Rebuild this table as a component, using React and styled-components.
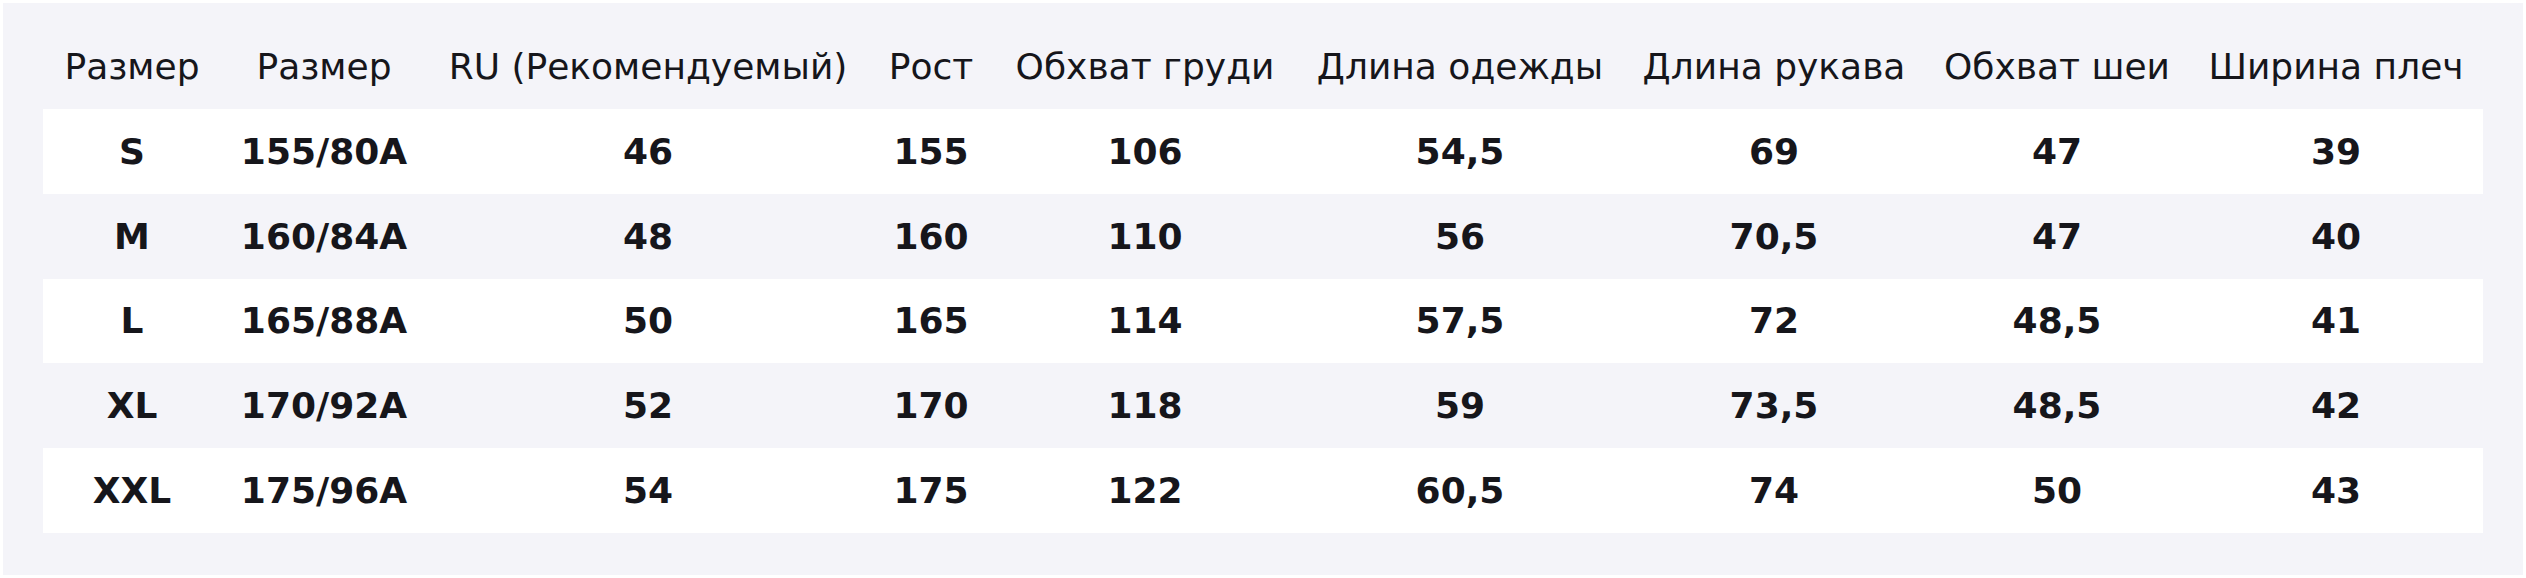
import styled, { createGlobalStyle } from 'styled-components';

const GlobalStyle = createGlobalStyle`
  html, body {
    margin: 0;
    padding: 0;
    background: #ffffff;
  }
  body {
    font-family: "DejaVu Sans", "Noto Sans", sans-serif;
  }
`;

const columns = '178px 206px 442px 124px 304px 326px 302px 264px 294px';

const headers = [
  'Размер',
  'Размер',
  'RU (Рекомендуемый)',
  'Рост',
  'Обхват груди',
  'Длина одежды',
  'Длина рукава',
  'Обхват шеи',
  'Ширина плеч',
];

const sizes = [
  ['S', '155/80A', '46', '155', '106', '54,5', '69', '47', '39'],
  ['M', '160/84A', '48', '160', '110', '56', '70,5', '47', '40'],
  ['L', '165/88A', '50', '165', '114', '57,5', '72', '48,5', '41'],
  ['XL', '170/92A', '52', '170', '118', '59', '73,5', '48,5', '42'],
  ['XXL', '175/96A', '54', '175', '122', '60,5', '74', '50', '43'],
];

const Panel = styled.div`
  margin: 3px;
  width: 2520px;
  height: 572px;
  box-sizing: border-box;
  padding: 20px 40px 42px;
  background: #f4f4f9;
`;

const Row = styled.div`
  display: grid;
  grid-template-columns: ${columns};
  height: ${({ $head }) => ($head ? '86px' : '84.8px')};
  background: ${({ $striped }) => ($striped ? '#ffffff' : 'transparent')};
`;

const Cell = styled.div`
  display: flex;
  align-items: center;
  justify-content: center;
  white-space: nowrap;
  font-size: 36px;
  color: #16161b;
  font-weight: ${({ $bold }) => ($bold ? 700 : 400)};
`;

export default function App() {
  return (
    <>
      <GlobalStyle />
      <Panel>
        <Row $head>
          {headers.map((h, i) => (
            <Cell key={i}>{h}</Cell>
          ))}
        </Row>
        {sizes.map((row, r) => (
          <Row key={row[0]} $striped={r % 2 === 0}>
            {row.map((v, i) => (
              <Cell key={i} $bold>
                {v}
              </Cell>
            ))}
          </Row>
        ))}
      </Panel>
    </>
  );
}
